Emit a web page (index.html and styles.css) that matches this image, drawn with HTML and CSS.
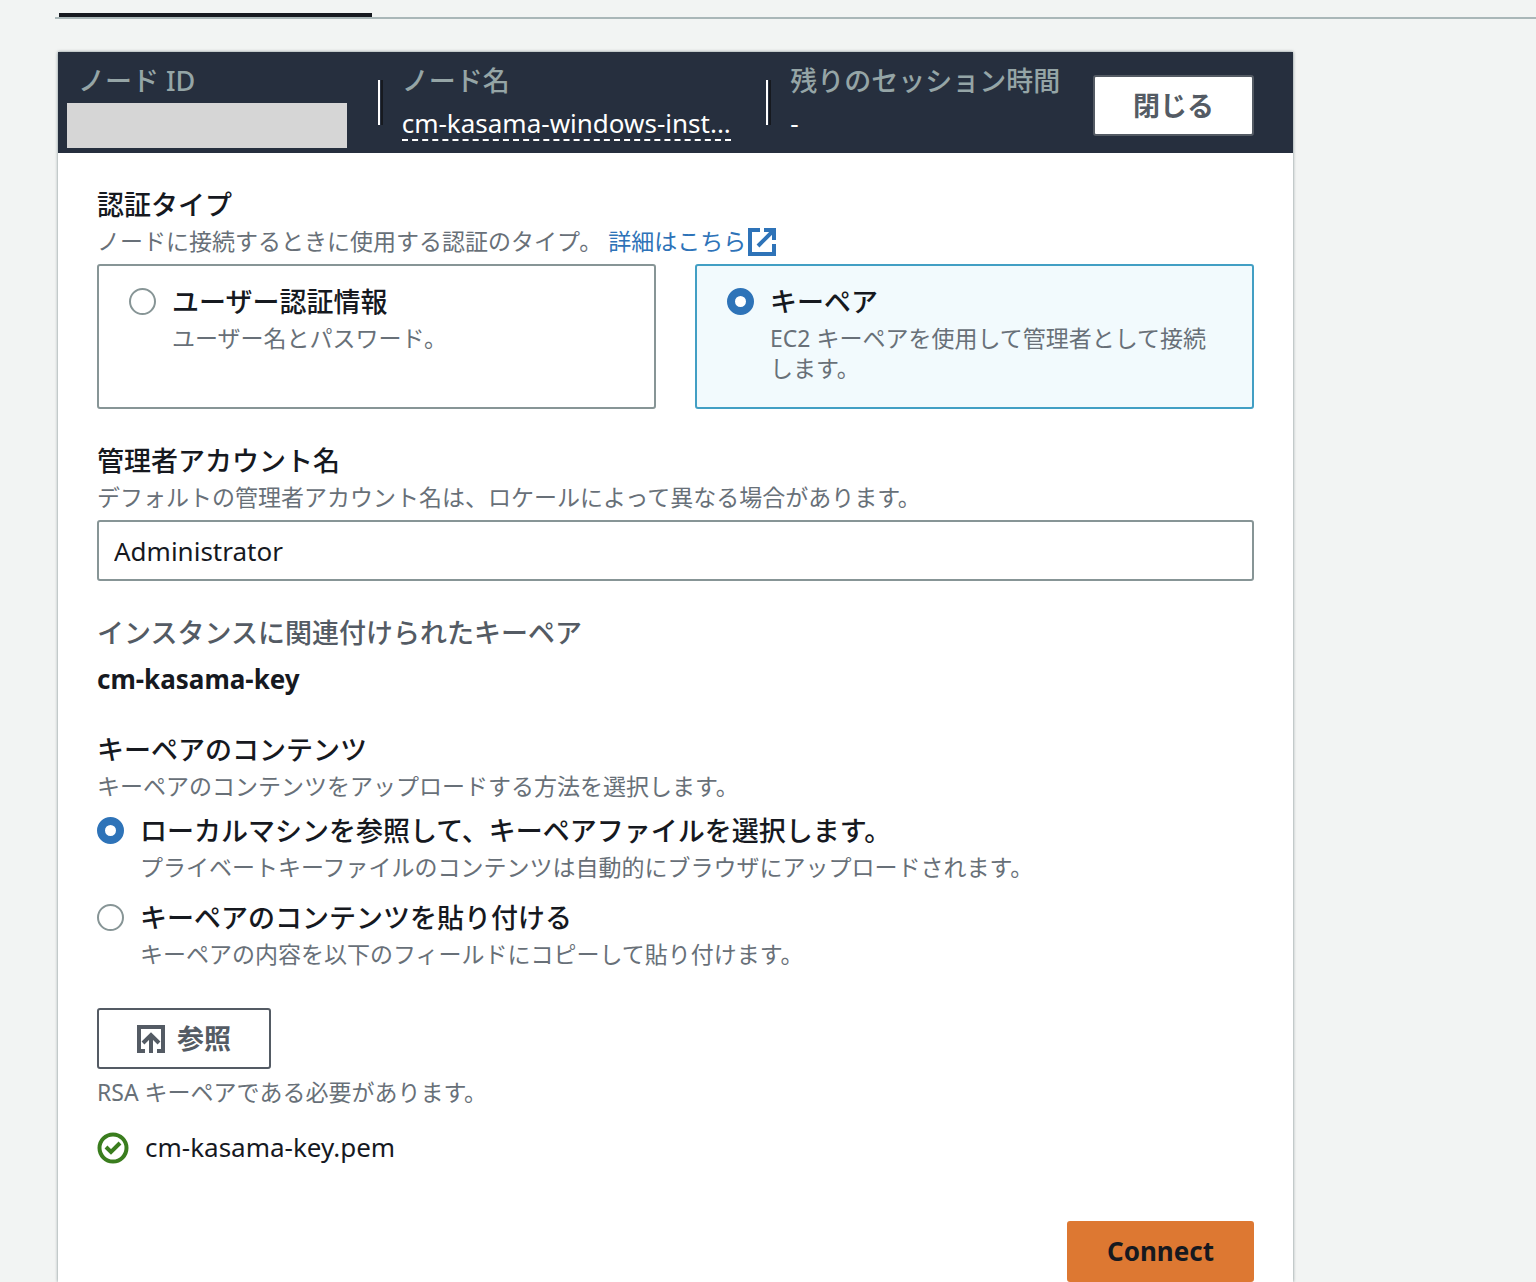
FILE: index.html
```
<!DOCTYPE html>
<html lang="ja">
<head>
  <meta charset="UTF-8">
  <meta name="viewport" content="width=device-width, initial-scale=1.0">
  <title>cm-kasama-windows</title>
  <link rel="stylesheet" href="styles.css">
</head>
<body>
  <div class="tabs"><div class="tab-active"></div></div>
  <main class="panel">
    <header class="session">
      <div class="session-col">
        <div class="session-label">ノード ID</div>
        <div class="session-value masked"></div>
      </div>
      <div class="divider"></div>
      <div class="session-col">
        <div class="session-label">ノード名</div>
        <div class="session-value"><span class="node-name">cm-kasama-windows-inst...</span></div>
      </div>
      <div class="divider"></div>
      <div class="session-col">
        <div class="session-label">残りのセッション時間</div>
        <div class="session-value">-</div>
      </div>
      <button type="button" class="btn btn-close">閉じる</button>
    </header>

    <form class="content">
      <fieldset class="field">
        <legend class="label">認証タイプ</legend>
        <p class="hint">ノードに接続するときに使用する認証のタイプ。
          <a href="#" class="link">詳細はこちら<svg class="icon-external" viewBox="0 0 28 28" fill="none" stroke="currentColor" stroke-width="4"><path d="M12 2H2v24h24V16"/><path d="M16 2h10v10M26 2L10 18" /></svg></a>
        </p>
        <div class="tiles">
          <div class="tile">
            <input type="radio" class="radio" name="auth" id="auth-user">
            <label for="auth-user">
              <span class="option">ユーザー認証情報</span>
              <span class="hint">ユーザー名とパスワード。</span>
            </label>
          </div>
          <div class="tile selected">
            <input type="radio" class="radio" name="auth" id="auth-key" checked>
            <label for="auth-key">
              <span class="option">キーペア</span>
              <span class="hint">EC2 キーペアを使用して管理者として接続します。</span>
            </label>
          </div>
        </div>
      </fieldset>

      <div class="field">
        <label class="label" for="account">管理者アカウント名</label>
        <p class="hint">デフォルトの管理者アカウント名は、ロケールによって異なる場合があります。</p>
        <input type="text" class="text-input" id="account" value="Administrator">
      </div>

      <div class="field">
        <div class="label muted">インスタンスに関連付けられたキーペア</div>
        <div class="key-name">cm-kasama-key</div>
      </div>

      <fieldset class="field">
        <legend class="label">キーペアのコンテンツ</legend>
        <p class="hint">キーペアのコンテンツをアップロードする方法を選択します。</p>
        <div class="choices">
          <div class="choice">
            <input type="radio" class="radio" name="source" id="source-file" checked>
            <label for="source-file">
              <span class="option">ローカルマシンを参照して、キーペアファイルを選択します。</span>
              <span class="hint">プライベートキーファイルのコンテンツは自動的にブラウザにアップロードされます。</span>
            </label>
          </div>
          <div class="choice">
            <input type="radio" class="radio" name="source" id="source-paste">
            <label for="source-paste">
              <span class="option">キーペアのコンテンツを貼り付ける</span>
              <span class="hint">キーペアの内容を以下のフィールドにコピーして貼り付けます。</span>
            </label>
          </div>
        </div>
      </fieldset>

      <div class="upload">
        <button type="button" class="btn btn-browse">
          <svg class="icon-upload" viewBox="0 0 28 28" fill="none" stroke="currentColor" stroke-width="4"><path d="M8 26H2V2h24v24h-6"/><path d="M14 28V11M6 18l8-8 8 8"/></svg>
          参照
        </button>
        <p class="hint">RSA キーペアである必要があります。</p>
        <div class="file">
          <svg class="icon-check" viewBox="0 0 32 32" fill="none" stroke="currentColor" stroke-width="4"><circle cx="16" cy="16" r="13.5"/><path d="M9 15l5 5 9-9"/></svg>
          cm-kasama-key.pem
        </div>
      </div>

      <div class="actions">
        <button type="submit" class="btn btn-connect">Connect</button>
      </div>
    </form>
  </main>
</body>
</html>
```
FILE: styles.css
```
* {
  box-sizing: border-box;
  margin: 0;
  padding: 0;
}
body {
  min-height: 100vh;
  display: flex;
  flex-direction: column;
  background: #f2f4f3;
  color: #16191f;
  font-family: "Noto Sans", "Noto Sans CJK JP", sans-serif;
  font-size: 27px;
  font-weight: 500;
  line-height: 37px;
}
button, input {
  font: inherit;
  color: inherit;
}
fieldset {
  border: 0;
  min-width: 0;
}
.tabs {
  margin-left: 55px;
  padding: 13px 0 0 4px;
  border-bottom: 2px solid #aab7b8;
}
.tab-active {
  width: 313px;
  height: 4px;
  background: #16191f;
}
.panel {
  flex: 1;
  margin: 33px 243px 0 58px;
  background: #fff;
  box-shadow: 0 0 3px rgba(0, 28, 36, .5);
}

/* session header */
.session {
  display: grid;
  grid-template-columns: 311fr auto 387fr auto 325fr auto;
  align-items: center;
  padding: 10px 39px 5px 9px;
  background: #262f3e;
}
.session-col {
  min-width: 0;
}
.session-label {
  padding-left: 11px;
  margin-bottom: 4px;
  color: #95a5a6;
}
.divider ~ .session-col {
  padding-left: 22px;
}
.divider ~ .session-col .session-label {
  padding-left: 0;
}
.session-value {
  display: flex;
  align-items: center;
  height: 45px;
  padding-bottom: 4px;
  color: #fff;
}
.masked {
  width: 90%;
  background: #d6d6d6;
}
.node-name {
  line-height: 32px;
  border-bottom: 2px dashed #fff;
  white-space: nowrap;
}
.divider {
  width: 2px;
  height: 45px;
  margin-bottom: 6px;
  background: #fff;
  box-shadow: 3px 0 #16191f;
}

.btn {
  display: inline-flex;
  align-items: center;
  justify-content: center;
  gap: 12px;
  padding: 10px 38px;
  border: 2px solid #545b64;
  border-radius: 3px;
  background: #fff;
  color: #545b64;
  font-weight: bold;
}
.btn-connect {
  border-color: #dd7832;
  background: #dd7832;
  color: #16191f;
  font-size: 26px;
}

/* form */
.content {
  padding: 33px 39px 0;
}
.field {
  margin-bottom: 33px;
}
.label {
  display: block;
  margin-bottom: 3px;
}
.hint {
  display: block;
  color: #687078;
  font-size: 23px;
  font-weight: 400;
  line-height: 30px;
}
.muted {
  color: #545b64;
}
.link {
  color: #2e73b8;
  text-decoration: none;
}
.icon-external {
  width: 28px;
  height: 28px;
  margin-left: 2px;
  vertical-align: bottom;
}
.tiles {
  display: grid;
  grid-template-columns: 1fr 1fr;
  gap: 39px;
  margin-top: 8px;
}
.tile, .choice {
  display: flex;
  gap: 16px;
}
.tile {
  padding: 17px 30px 24px;
  border: 2px solid #879596;
  border-radius: 3px;
}
.tile.selected {
  border-color: #429fc4;
  background: #f2fafd;
}
.option {
  display: block;
  margin-bottom: 3px;
}
.radio {
  appearance: none;
  flex: none;
  width: 27px;
  height: 27px;
  margin-top: 5px;
  border: 2px solid #879596;
  border-radius: 50%;
  background: #fff;
}
.radio:checked {
  border: 8px solid #2e73b8;
}
.text-input {
  display: block;
  width: 100%;
  height: 61px;
  margin-top: 8px;
  padding: 0 15px;
  border: 2px solid #879596;
  border-radius: 3px;
  background: #fff;
}
.session-value, .text-input, .file {
  font-size: 26px;
  font-weight: 400;
}
.key-name {
  margin-top: 10px;
  font-size: 26px;
  font-weight: bold;
}
.choices {
  display: grid;
  gap: 17px;
  margin-top: 11px;
}
.upload {
  margin-top: 39px;
}
.upload .hint {
  margin: 8px 0 22px;
}
.icon-upload {
  width: 28px;
  height: 28px;
}
.file {
  display: flex;
  align-items: center;
  gap: 16px;
}
.icon-check {
  width: 32px;
  height: 32px;
  color: #3a7d1e;
}
.actions {
  display: flex;
  justify-content: flex-end;
  margin-top: 55px;
}
```
